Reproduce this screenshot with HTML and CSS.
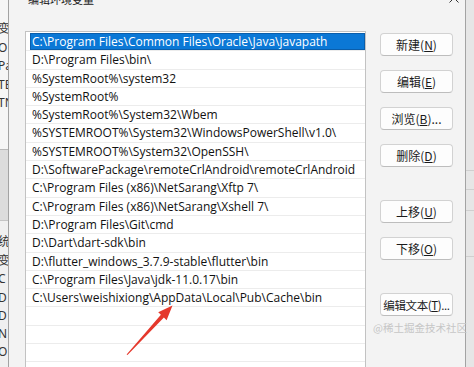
FILE: index.html
```html
<!DOCTYPE html>
<html lang="zh-CN">
<head>
  <meta charset="UTF-8">
  <title>编辑环境变量</title>
  <link rel="stylesheet" href="styles.css">
</head>
<body>
  <div class="screen">

    <div class="bg-left">
      <div class="bg-top">
        <div class="frag first">变</div>
        <div class="frag">O</div>
        <div class="frag">Pa</div>
        <div class="frag">TE</div>
        <div class="frag">TN</div>
      </div>
      <div class="bg-band"></div>
      <div class="bg-bottom">
        <div class="frag first">统</div>
        <div class="frag">变</div>
        <div class="frag">C</div>
        <div class="frag">D</div>
        <div class="frag">D</div>
        <div class="frag">N</div>
        <div class="frag">O</div>
      </div>
    </div>

    <div class="dialog">
      <div class="titlebar">
        <span class="title">编辑环境变量</span>
        <svg class="close" width="10" height="10" viewBox="0 0 10 10">
          <path d="M0.5 0.5 L9.5 9.5 M9.5 0.5 L0.5 9.5" stroke="#333" stroke-width="1" fill="none"/>
        </svg>
      </div>

      <div class="content">
        <div class="listbox">
          <div class="row selected"><span class="cell">C:\Program Files\Common Files\Oracle\Java\javapath</span></div>
          <div class="row"><span class="cell">D:\Program Files\bin\</span></div>
          <div class="row"><span class="cell">%SystemRoot%\system32</span></div>
          <div class="row"><span class="cell">%SystemRoot%</span></div>
          <div class="row"><span class="cell">%SystemRoot%\System32\Wbem</span></div>
          <div class="row"><span class="cell">%SYSTEMROOT%\System32\WindowsPowerShell\v1.0\</span></div>
          <div class="row"><span class="cell">%SYSTEMROOT%\System32\OpenSSH\</span></div>
          <div class="row"><span class="cell">D:\SoftwarePackage\remoteCrlAndroid\remoteCrlAndroid</span></div>
          <div class="row"><span class="cell">C:\Program Files (x86)\NetSarang\Xftp 7\</span></div>
          <div class="row"><span class="cell">C:\Program Files (x86)\NetSarang\Xshell 7\</span></div>
          <div class="row"><span class="cell">D:\Program Files\Git\cmd</span></div>
          <div class="row"><span class="cell">D:\Dart\dart-sdk\bin</span></div>
          <div class="row"><span class="cell">D:\flutter_windows_3.7.9-stable\flutter\bin</span></div>
          <div class="row"><span class="cell">C:\Program Files\Java\jdk-11.0.17\bin</span></div>
          <div class="row"><span class="cell">C:\Users\weishixiong\AppData\Local\Pub\Cache\bin</span></div>
          <div class="row"><span class="cell"></span></div>
          <div class="row"><span class="cell"></span></div>
          <div class="row"><span class="cell"></span></div>
        </div>

        <div class="actions">
          <button class="btn">新建(<u>N</u>)</button>
          <button class="btn">编辑(<u>E</u>)</button>
          <button class="btn">浏览(<u>B</u>)...</button>
          <button class="btn">删除(<u>D</u>)</button>
          <button class="btn spaced">上移(<u>U</u>)</button>
          <button class="btn">下移(<u>O</u>)</button>
          <button class="btn spaced wide">编辑文本(<u>T</u>)...</button>
        </div>
      </div>
    </div>

    <div class="bg-right">
      <div class="line one"></div>
      <div class="line two"></div>
      <div class="line three"></div>
      <div class="line four"></div>
    </div>

    <div class="watermark">@稀土掘金技术社区</div>

    <svg class="arrow" width="474" height="367" viewBox="0 0 474 367">
      <polygon points="126.6,354.4 127.5,355.1 163.9,317.6 166.6,320.2 172.5,305.5 158.2,312.2 160.9,314.8" fill="#e5382c"/>
    </svg>
  </div>
</body>
</html>
```

FILE: styles.css
```css
body {
  margin: 0;
  overflow: hidden;
  font-family: "Open Sans", "Noto Sans CJK SC", sans-serif;
  color: #1b1b1b;
}
.screen {
  position: relative;
  display: flex;
  width: 474px;
  height: 367px;
  overflow: hidden;
  background-color: #f3f3f3;
}

/* window behind the dialog */
.bg-left {
  width: 8px;
  flex: none;
  display: flex;
  flex-direction: column;
  overflow: hidden;
  font-size: 12px;
  color: #333;
}
.bg-top {
  height: 150px;
  padding-top: 18px;
  box-sizing: border-box;
  background-color: #f6f6f6;
  border-bottom: 1px solid #b8b8b8;
}
.bg-band {
  height: 70px;
  background-color: #dcdcdc;
  border-bottom: 1px solid #c4c4c4;
}
.bg-bottom {
  flex: 1;
  padding-top: 10px;
  background-color: #f0f0f0;
}
.frag {
  height: 18.3px;
  line-height: 18.3px;
  margin-left: -2px;
  white-space: nowrap;
  font-family: "Noto Sans", "Noto Sans CJK SC", sans-serif;
}
.frag.first {
  height: 21px;
  line-height: 21px;
}
.bg-right {
  width: 8px;
  flex: none;
  display: flex;
  flex-direction: column;
  background-color: #e6e6e6;
}
.bg-right .line {
  border-top: 1px solid #cfcfcf;
}
.bg-right .one { margin-top: 170px; }
.bg-right .two { margin-top: 18px; }
.bg-right .three { margin-top: 20px; }
.bg-right .four { margin-top: 45px; }

/* dialog */
.dialog {
  flex: 1;
  display: flex;
  flex-direction: column;
  background-color: #f3f3f3;
  border-left: 1px solid #a3a3a3;
  border-right: 1px solid #a3a3a3;
}
.titlebar {
  height: 31px;
  display: flex;
  justify-content: space-between;
  align-items: flex-start;
  padding: 0 6px 0 19px;
  flex: none;
}
.title {
  margin-top: -6px;
  font-size: 11px;
  line-height: 12px;
  color: #222;
}
.close {
  margin-top: -7px;
}
.content {
  flex: 1;
  display: flex;
  gap: 14px;
  padding: 0 12px 0 16px;
  min-height: 0;
}
.listbox {
  width: 341px;
  box-sizing: border-box;
  background-color: #fff;
  border: 1px solid #c2c2c2;
  border-bottom: none;
  padding-top: 1px;
  overflow: hidden;
}
.row {
  height: 18.3px;
  box-sizing: border-box;
  border-bottom: 1px solid #ececec;
  padding-left: 4px;
  font-size: 12px;
  white-space: nowrap;
  color: #111;
}
.cell {
  display: block;
  height: 100%;
  padding-left: 2px;
  line-height: 17.3px;
  overflow: hidden;
}
.row.selected .cell {
  background-color: #0b78d6;
  color: #fff;
  box-shadow: inset 0 0 0 1px #0a5eab;
}
.actions {
  width: 73px;
  display: flex;
  flex-direction: column;
  gap: 14px;
  padding-top: 2px;
}
.btn {
  height: 23px;
  padding: 0;
  background-color: #fdfdfd;
  border: 1px solid #d2d2d2;
  border-bottom-color: #bdbdbd;
  border-radius: 4px;
  font-family: "Noto Sans CJK SC", sans-serif;
  font-size: 12px;
  color: #1b1b1b;
  white-space: nowrap;
}
.btn u {
  text-underline-offset: 1px;
}
.btn.spaced {
  margin-top: 19px;
}
.btn.wide {
  font-size: 11.5px;
  letter-spacing: -0.4px;
}

/* overlays on the screenshot */
.watermark {
  position: absolute;
  left: 373px;
  top: 320px;
  font-family: "Noto Sans CJK SC", sans-serif;
  font-size: 10.5px;
  color: #c6c6c6;
}
.arrow {
  position: absolute;
  left: 0;
  top: 0;
  pointer-events: none;
}
```
